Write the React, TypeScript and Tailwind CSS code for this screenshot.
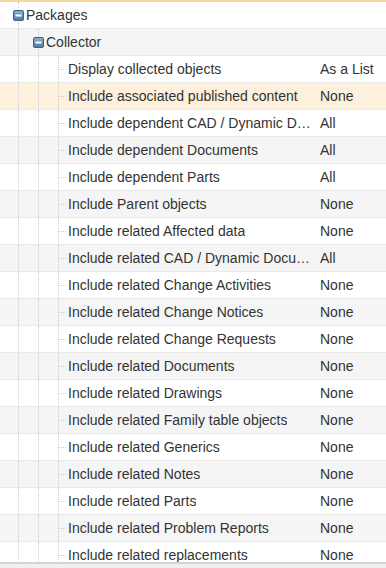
const leaves: [string, string][] = [
  ["Display collected objects", "As a List"],
  ["Include associated published content", "None"],
  ["Include dependent CAD / Dynamic Documents", "All"],
  ["Include dependent Documents", "All"],
  ["Include dependent Parts", "All"],
  ["Include Parent objects", "None"],
  ["Include related Affected data", "None"],
  ["Include related CAD / Dynamic Documents", "All"],
  ["Include related Change Activities", "None"],
  ["Include related Change Notices", "None"],
  ["Include related Change Requests", "None"],
  ["Include related Documents", "None"],
  ["Include related Drawings", "None"],
  ["Include related Family table objects", "None"],
  ["Include related Generics", "None"],
  ["Include related Notes", "None"],
  ["Include related Parts", "None"],
  ["Include related Problem Reports", "None"],
  ["Include related replacements", "None"],
];

function MinusBox() {
  return (
    <svg width="11" height="11" viewBox="0 0 11 11" className="shrink-0">
      <defs>
        <linearGradient id="mb" x1="0" y1="0" x2="0" y2="1">
          <stop offset="0" stopColor="#8fb0d4" />
          <stop offset="1" stopColor="#4f76a3" />
        </linearGradient>
      </defs>
      <rect x="0.5" y="0.5" width="10" height="10" rx="1.5" fill="url(#mb)" stroke="#3d618c" />
      <rect x="2.5" y="4.5" width="6" height="2" fill="#fff" />
    </svg>
  );
}

function Row({ shade, hl, children }: { shade: boolean; hl?: boolean; children: React.ReactNode }) {
  return (
    <div
      className={`flex h-[27px] shrink-0 items-stretch border-b border-[#e9e9e9] ${
        hl ? "bg-[#fdf0dc]" : shade ? "bg-[#f5f5f5]" : "bg-white"
      }`}
    >
      {children}
    </div>
  );
}

export default function App() {
  return (
    <div
      className="flex h-[568px] w-[386px] flex-col overflow-hidden bg-white text-[14px] text-[#333]"
      style={{ fontFamily: '"Liberation Sans", Arial, sans-serif' }}
    >
      <div className="h-[2px] shrink-0 bg-[#f8d79e]" />
      <div className="flex min-h-0 flex-1 flex-col overflow-hidden">
        {/* Packages */}
        <Row shade={false}>
          <div className="relative flex w-[13px] shrink-0">
            <div className="absolute left-[18px] top-0 h-[8px] border-l border-dotted border-[#d0d0d0]" />
            <div className="absolute left-[18px] bottom-0 h-[6px] border-l border-dotted border-[#d0d0d0]" />
          </div>
          <div className="flex items-center">
            <div className="mr-[2px] pt-[1px]">
              <MinusBox />
            </div>
            <span>Packages</span>
          </div>
        </Row>
        {/* Collector */}
        <Row shade={true}>
          <div className="relative w-[33px] shrink-0">
            <div className="absolute left-[18px] top-0 h-full border-l border-dotted border-[#d0d0d0]" />
            <div className="absolute left-[38px] top-0 h-[8px] border-l border-dotted border-[#d0d0d0]" />
            <div className="absolute left-[38px] bottom-0 h-[6px] border-l border-dotted border-[#d0d0d0]" />
          </div>
          <div className="flex items-center">
            <div className="mr-[2px] pt-[1px]">
              <MinusBox />
            </div>
            <span>Collector</span>
          </div>
        </Row>
        {leaves.map(([name, value], i) => (
          <Row key={name} shade={i % 2 === 1} hl={i === 1}>
            <div className="relative w-[68px] shrink-0">
              <div className="absolute left-[18px] top-0 h-full border-l border-dotted border-[#d0d0d0]" />
              <div className="absolute left-[38px] top-0 h-full border-l border-dotted border-[#d0d0d0]" />
              <div className="absolute left-[58px] top-0 h-full border-l border-dotted border-[#d0d0d0]" />
              <div className="absolute left-[59px] top-[13px] w-[7px] border-t border-dotted border-[#d0d0d0]" />
            </div>
            <div className="flex w-[248px] min-w-0 items-center pr-[2px]">
              <span className="truncate">{name}</span>
            </div>
            <div className="flex min-w-0 flex-1 items-center pl-[4px]">
              <span className="whitespace-nowrap">{value}</span>
            </div>
          </Row>
        ))}
      </div>
      <div className="h-[6px] shrink-0 border-t-2 border-[#d6d6d6] bg-[#f0f0f0]" />
    </div>
  );
}
